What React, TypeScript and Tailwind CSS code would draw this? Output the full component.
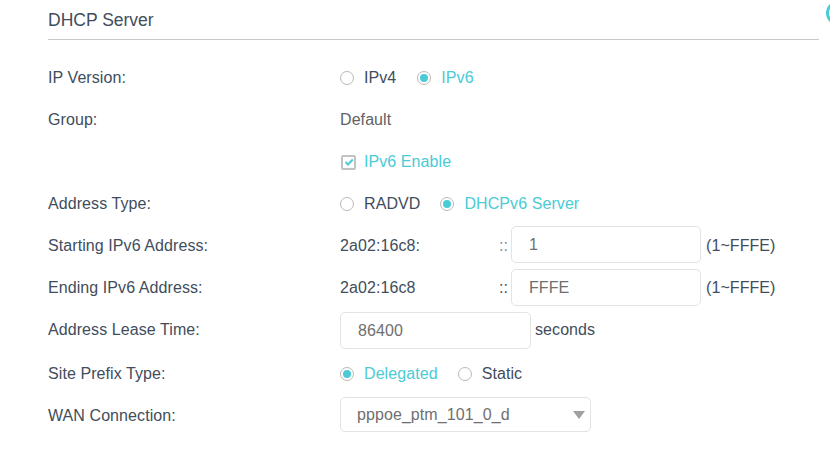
const label = "w-[292px] shrink-0 text-[#414d5c]";
const cyan = "text-[#4acbd6]";
const dark = "text-[#414d5c]";

function Radio({ checked, text, className }: { checked?: boolean; text: string; className?: string }) {
  return (
    <label className={`flex items-center ${className ?? ""}`}>
      <span className="flex h-[14px] w-[14px] shrink-0 items-center justify-center rounded-full border-[1.5px] border-[#b9b9b9] bg-white">
        {checked && <span className="h-[8px] w-[8px] rounded-full bg-[#4acbd6]" />}
      </span>
      <span className={`ml-[10px] ${checked ? cyan : dark}`}>{text}</span>
    </label>
  );
}

function Row({ name, children, className }: { name?: string; children: React.ReactNode; className?: string }) {
  return (
    <div className={`flex h-[42px] items-center ${className ?? ""}`}>
      <div className={label}>{name}</div>
      <div className="flex flex-1 items-center">{children}</div>
    </div>
  );
}

function Field({ value, className }: { value: string; className: string }) {
  return (
    <div className={`flex h-[37px] items-center rounded-[5px] border border-[#e3e3e3] bg-white pl-[17px] text-[#6f6f6f] ${className}`}>
      {value}
    </div>
  );
}

export default function App() {
  return (
    <div className="relative h-[449px] w-[830px] overflow-hidden bg-white pl-[48px] font-['Liberation_Sans',Arial,sans-serif] text-[16px] tracking-[0.08px]">
      <div className="absolute left-[826px] top-[1px] h-[24px] w-[24px] rounded-full border-[3px] border-[#4acbd6]" />
      <div className="flex h-[40px] w-[771px] items-center border-b border-[#c8c8c8] pt-[1px] text-[17.5px] tracking-normal text-[#414d5c]">DHCP Server</div>
      <div className="pt-[17px]">
        <Row name="IP Version:">
          <Radio text="IPv4" />
          <Radio checked text="IPv6" className="ml-[21px]" />
        </Row>
        <Row name="Group:">
          <span className="text-[#5f6266]">Default</span>
        </Row>
        <Row>
          <span className="ml-[1px] flex h-[15px] w-[15px] items-center justify-center rounded-[2px] border-2 border-[#c2c2c2]">
            <svg viewBox="0 0 10 10" className="h-[10px] w-[10px]">
              <path d="M1.5 5 L4 7.5 L8.8 2.5" fill="none" stroke="#4acbd6" strokeWidth="2" />
            </svg>
          </span>
          <span className={`ml-[8px] ${cyan}`}>IPv6 Enable</span>
        </Row>
        <Row name="Address Type:">
          <Radio text="RADVD" />
          <Radio checked text="DHCPv6 Server" className="ml-[20px]" />
        </Row>
        <Row name="Starting IPv6 Address:">
          <span className={`w-[159px] ${dark}`}>2a02:16c8:</span>
          <span className="w-[12px] text-[#6f8fa5]">::</span>
          <Field value="1" className="-mt-[3px] w-[190px]" />
          <span className={`ml-[5px] ${dark}`}>(1~FFFE)</span>
        </Row>
        <Row name="Ending IPv6 Address:">
          <span className={`w-[159px] ${dark}`}>2a02:16c8</span>
          <span className="w-[12px] text-[#414d5c]">::</span>
          <Field value="FFFE" className="-mt-[1px] w-[190px]" />
          <span className={`ml-[5px] ${dark}`}>(1~FFFE)</span>
        </Row>
        <Row name="Address Lease Time:">
          <Field value="86400" className="mt-[1px] w-[191px]" />
          <span className={`ml-[4px] ${dark}`}>seconds</span>
        </Row>
        <Row name="Site Prefix Type:" className="mt-[2px]">
          <Radio checked text="Delegated" />
          <Radio text="Static" className="ml-[20px]" />
        </Row>
        <Row name="WAN Connection:">
          <div className="relative -mt-[3px] flex h-[35px] w-[251px] items-center rounded-[5px] border border-[#e3e3e3] pl-[16px] text-[#6f6f6f]">
            pppoe_ptm_101_0_d
            <span className="absolute right-[5px] top-[13px] h-0 w-0 border-x-[6px] border-t-[8px] border-x-transparent border-t-[#a0a0a0]" />
          </div>
        </Row>
      </div>
    </div>
  );
}
